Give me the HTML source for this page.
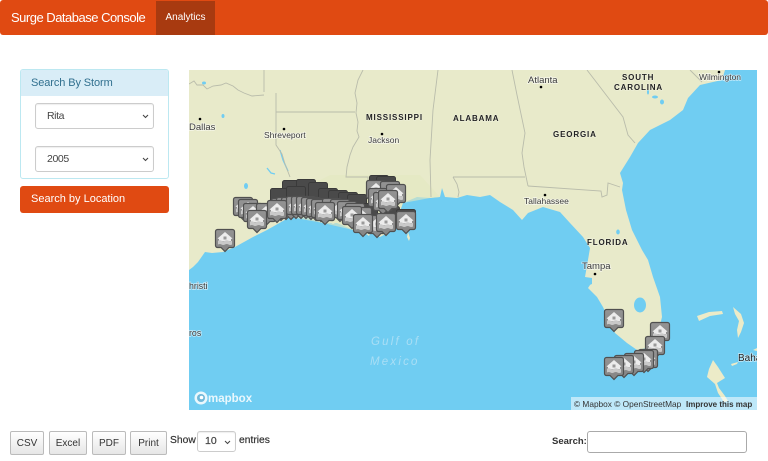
<!DOCTYPE html>
<html><head><meta charset="utf-8"><title>Surge Database Console</title>
<style>
html,body{margin:0;padding:0;background:#fff;width:768px;height:461px;overflow:hidden}
body{font-family:"Liberation Sans",sans-serif;position:relative;color:#333}
.a{position:absolute;box-sizing:border-box}
.sel{background:#fff;border:1px solid #ccc;border-radius:3px;font-size:10.5px;letter-spacing:-.4px;color:#444;box-shadow:inset 0 1px 1px rgba(0,0,0,.07)}
.sel svg{position:absolute;right:4px;top:50%;margin-top:-2px}
.btn{background:linear-gradient(#fff,#e6e6e6);border:1px solid #bbb;border-radius:2px;font-size:10px;color:#333;text-align:center;line-height:24px;height:24px;top:431px}
</style></head><body>
<div class="a" style="left:0;top:0;width:768px;height:35px;background:#e04a12;border-radius:3px"></div>
<div class="a" style="left:11px;top:0;height:35px;line-height:36px;color:#fff;font-size:13px;letter-spacing:-.5px;white-space:nowrap">Surge Database Console</div>
<div class="a" style="left:156px;top:1px;width:59px;height:34px;background:#a83a10;color:#fff;font-size:10px;line-height:34px;text-align:center">Analytics</div>

<div class="a" style="left:20px;top:69px;width:149px;height:110px;border:1px solid #bce8f1;border-radius:3px;background:#fff"></div>
<div class="a" style="left:21px;top:70px;width:147px;height:26px;background:#d9edf7;border-radius:2px 2px 0 0;color:#31708f;font-size:11px;line-height:27px;padding-left:10px;letter-spacing:-.1px">Search By Storm</div>
<div class="a sel" style="left:35px;top:103px;width:119px;height:26px;line-height:24px;padding-left:11px">Rita<svg width="7" height="5" viewBox="0 0 7 5"><path d="M1 1l2.5 2.5L6 1" fill="none" stroke="#444" stroke-width="1.1"/></svg></div>
<div class="a sel" style="left:35px;top:146px;width:119px;height:26px;line-height:24px;padding-left:11px">2005<svg width="7" height="5" viewBox="0 0 7 5"><path d="M1 1l2.5 2.5L6 1" fill="none" stroke="#444" stroke-width="1.1"/></svg></div>
<div class="a" style="left:20px;top:186px;width:149px;height:27px;background:#e04a12;border-radius:3px;color:#fff;font-size:11px;line-height:27px;padding-left:11px">Search by Location</div>

<svg class="a" style="left:189px;top:70px" width="568" height="340" viewBox="189 70 568 340">
<defs>
<linearGradient id="g" x1="0" y1="0" x2="0" y2="1"><stop offset="0" stop-color="#949494"/><stop offset="1" stop-color="#858585"/></linearGradient>
<symbol id="m" width="20" height="24" viewBox="0 0 20 24" overflow="visible">
<path d="M2.5 .5h15a2 2 0 0 1 2 2v14a2 2 0 0 1-2 2h-3.500l-4 4-4-4H2.500a2 2 0 0 1-2-2v-14a2 2 0 0 1 2-2z" fill="url(#g)" stroke="#505050" stroke-width="1.200"/>
<path d="M2.500 9.500L10 3l7.500 6.500-1.500.5v2H4v-2z" fill="#ececec"/>
<rect x="8.500" y="7.500" width="3" height="3" fill="#9a9a9a"/>
<path d="M3 11.800q1.750-1 3.500 0t3.500 0 3.500 0 3.500 0v3.700q-1.750 1-3.500 0t-3.500 0-3.500 0-3.500 0z" fill="#c9c9c9"/>
</symbol>
<symbol id="d" width="20" height="24" viewBox="0 0 20 24" overflow="visible">
<rect x=".5" y=".5" width="19" height="18" rx="2" fill="#4a4a4a" stroke="#3a3a3a"/>
</symbol>
</defs>
<rect x="189" y="70" width="568" height="340" fill="#70cdf2"/>
<path d="M189 70H725L722 80 713 82 700 85 688 98 683 110 670 120 650 130 638 143 630 157 620 173 623 183 622 190 626 210 632 230 642 250 648 260 653 277 660 297 662 317 657 337 647 348 637 350 627 343 615 333 603 307 597 297 588 288 592 282 585 277 588 260 590 248 583 237 570 223 560 212 543 207 528 213 522 220 513 210 500 202 490 195 480 197 467 195 457 198 445 197 442 188 440 197 430 198 417 197 403 203 393 230 380 237 370 233 353 230 337 223 323 223 307 218 290 217 267 230 253 237 235 247 223 252 212 253 205 252 198 262 193 267 189 270Z" fill="#e8eaca"/>
<path d="M290 217L300 190 330 175 420 175 440 197 430 198 403 203 393 230 353 230 323 223Z" fill="#e2e7bf" opacity=".6"/>
<g fill="#70cdf2" stroke="none">
<ellipse cx="640" cy="305" rx="6" ry="7.500"/>
<ellipse cx="618" cy="232" rx="1.800" ry="2.500"/><ellipse cx="246" cy="186" rx="2" ry="3"/><ellipse cx="223" cy="116" rx="1.500" ry="2"/><ellipse cx="204" cy="83" rx="2" ry="1.500"/>
<ellipse cx="655" cy="97" rx="3" ry="1.500"/><ellipse cx="662" cy="102" rx="2" ry="2.500"/><ellipse cx="648" cy="92" rx="1" ry="2.500"/>
<path d="M585 277l7 1 0 6-5 2-3-4z"/>
</g>
<g fill="none" stroke="#70cdf2" stroke-width="1.300">
<path d="M280 150l3 10 5 11"/><path d="M267 168l4 5 4 1"/>
</g>
<g fill="#ecebc8">
<path d="M697 316l12-4 13-1 1 3-13 2-11 5zM733 307l8 7 3 9-3 9-3 6-1-8 2-9-4-7z"/>
<path d="M713 360l5 7 7 11-8 5 2 5 6 8 3 5-4 1-6-9-3-9-8-7 2-8zM731 364l7-2-1 2-5 2zM753 350l4-2v3z"/>
<path d="M355 223l5 1 3 3-4 0zM330 222l5 1-2 1zM365 233l5 1-1 2z"/><path d="M408 232l2 6-1 3-2-4z"/>
</g>
<g fill="none" stroke="#b9bcab" stroke-width=".9">
<path d="M189 84l5-3 3 4 6 0 4 4 6-3 8-1 5-2 7 3 5 4 6 3 8 3 12-1"/>
<path d="M264 70V92"/><path d="M276 93V145l6 9 3 10 5 13"/><path d="M276 112H355"/>
<path d="M363 70l-5 10-3 13 2 10-1 10 2 9-1 9 2 6-6 10-3 8-3 12-1 10H368v8"/>
<path d="M438 70l-5 40-3 50 1 37"/><path d="M453 177h72"/><path d="M453 177l4 7 2 8-1 5"/>
<path d="M512 70l5 25 8 38-3 20 2 14 4 19"/><path d="M528 186l73 5 1 6 5-2 1-12 12 4"/>
<path d="M587 70l10 13 13 17 13 17 5 18 7 8"/><path d="M690 70l12 12"/>
</g>
<g font-family="'Liberation Sans',sans-serif" font-size="8.500" fill="#3a3a3a" stroke="#fff" stroke-width="1.500" stroke-opacity=".6" paint-order="stroke">
<text x="189" y="130" font-size="9.500">Dallas</text>
<text x="264" y="138" font-size="8.500">Shreveport</text>
<text x="368" y="143" font-size="8.500">Jackson</text>
<text x="528" y="83" font-size="9.500">Atlanta</text>
<text x="524" y="204" font-size="8.500">Tallahassee</text>
<text x="699" y="80" font-size="8.500">Wilmington</text>
<text x="582" y="269" font-size="9.500">Tampa</text>
<text x="189" y="289" font-size="8.800">hristi</text>
<text x="189" y="336" font-size="8.800">ros</text>
<text x="738" y="361" font-size="10" fill="#222">Baha</text>
</g>
<g font-family="'Liberation Sans',sans-serif" font-weight="bold" font-size="8" fill="#222" letter-spacing=".85" stroke="#fff" stroke-width="1" stroke-opacity=".4" paint-order="stroke">
<text x="366" y="120">MISSISSIPPI</text>
<text x="453" y="121">ALABAMA</text>
<text x="553" y="137">GEORGIA</text>
<text x="622" y="80">SOUTH</text>
<text x="614" y="90">CAROLINA</text>
<text x="587" y="245">FLORIDA</text>
</g>
<g font-family="'Liberation Sans',sans-serif" font-style="italic" font-size="11.500" fill="#a9def5" letter-spacing="2.200">
<text x="371" y="345">Gulf of</text><text x="370" y="365">Mexico</text>
</g>
<g fill="#000">
<circle cx="200" cy="119" r="1.300"/><circle cx="284" cy="129" r="1.300"/><circle cx="382" cy="134" r="1.300"/><circle cx="541" cy="87" r="1.300"/><circle cx="545" cy="195" r="1.300"/><circle cx="719" cy="72" r="1.300"/><circle cx="595" cy="274" r="1.300"/>
</g>
<!-- dark stack -->
<use href="#d" x="282" y="180" width="20" height="24"/><use href="#d" x="296" y="179" width="20" height="24"/><use href="#d" x="308" y="182" width="20" height="24"/><use href="#d" x="270" y="188" width="20" height="24"/><use href="#d" x="286" y="186" width="20" height="24"/><use href="#d" x="318" y="188" width="20" height="24"/><use href="#d" x="328" y="190" width="20" height="24"/><use href="#d" x="338" y="192" width="20" height="24"/><use href="#d" x="347" y="194" width="20" height="24"/><use href="#d" x="369" y="175" width="20" height="24"/><use href="#d" x="376" y="176" width="20" height="24"/><use href="#d" x="358" y="203" width="20" height="24"/><use href="#d" x="380" y="206" width="20" height="24"/><use href="#d" x="396" y="209" width="20" height="24"/>
<!-- mid -->
<use href="#m" x="233" y="197" width="20" height="24"/><use href="#m" x="238" y="199" width="20" height="24"/><use href="#m" x="243" y="203" width="20" height="24"/><use href="#m" x="256" y="203" width="20" height="24"/>
<use href="#m" x="271" y="198" width="20" height="24"/><use href="#m" x="276" y="197" width="20" height="24"/><use href="#m" x="281" y="197" width="20" height="24"/><use href="#m" x="286" y="196" width="20" height="24"/><use href="#m" x="291" y="196" width="20" height="24"/><use href="#m" x="296" y="196" width="20" height="24"/><use href="#m" x="301" y="197" width="20" height="24"/><use href="#m" x="306" y="198" width="20" height="24"/><use href="#m" x="311" y="199" width="20" height="24"/>
<use href="#m" x="322" y="198" width="20" height="24"/><use href="#m" x="330" y="199" width="20" height="24"/><use href="#m" x="337" y="201" width="20" height="24"/><use href="#m" x="345" y="203" width="20" height="24"/><use href="#m" x="352" y="207" width="20" height="24"/><use href="#m" x="366" y="180" width="20" height="24"/><use href="#m" x="380" y="181" width="20" height="24"/><use href="#m" x="368" y="188" width="20" height="24"/><use href="#m" x="386" y="184" width="20" height="24"/><use href="#m" x="373" y="192" width="20" height="24"/><use href="#m" x="367" y="215" width="20" height="24"/>
<!-- front -->
<use href="#m" x="215" y="229" width="20" height="24"/><use href="#m" x="247" y="210" width="20" height="24"/><use href="#m" x="267" y="200" width="20" height="24"/><use href="#m" x="315" y="202" width="20" height="24"/><use href="#m" x="342" y="206" width="20" height="24"/><use href="#m" x="353" y="214" width="20" height="24"/><use href="#m" x="378" y="190" width="20" height="24"/><use href="#m" x="376" y="213" width="20" height="24"/><use href="#m" x="396" y="211" width="20" height="24"/>
<use href="#m" x="604" y="309" width="20" height="24"/><use href="#m" x="650" y="322" width="20" height="24"/><use href="#m" x="645" y="336" width="20" height="24"/><use href="#m" x="638" y="349" width="20" height="24"/><use href="#m" x="634" y="350" width="20" height="24"/><use href="#m" x="624" y="353" width="20" height="24"/><use href="#m" x="614" y="355" width="20" height="24"/><use href="#m" x="604" y="357" width="20" height="24"/>
<!-- logo -->
<circle cx="201" cy="398" r="6.500" fill="#fff" opacity=".85"/><circle cx="201" cy="398" r="4" fill="#70b8d8"/><circle cx="201.500" cy="397.500" r="1.800" fill="#fff"/>
<text x="208" y="402" font-family="'Liberation Sans',sans-serif" font-weight="bold" font-size="11.500" fill="#fff" fill-opacity=".85" letter-spacing="0">mapbox</text>
<rect x="571" y="397" width="186" height="13" fill="#fff" opacity=".55"/>
<text x="574" y="407" font-family="'Liberation Sans',sans-serif" font-size="8.300" fill="#333">© Mapbox © OpenStreetMap</text>
<text x="686" y="407" font-family="'Liberation Sans',sans-serif" font-size="8" font-weight="bold" fill="#333">Improve this map</text>
</svg>

<div class="a btn" style="left:10px;width:34px">CSV</div>
<div class="a btn" style="left:49px;width:38px">Excel</div>
<div class="a btn" style="left:92px;width:34px">PDF</div>
<div class="a btn" style="left:130px;width:37px">Print</div>
<div class="a" style="left:170px;top:435px;font-size:10.300px;line-height:12px;-webkit-text-stroke:.2px #333">Show</div>
<div class="a sel" style="left:197px;top:431px;width:39px;height:21px;line-height:19px;padding-left:7px;font-size:10.500px;letter-spacing:0;-webkit-text-stroke:.2px #444">10<svg width="7" height="5" viewBox="0 0 7 5"><path d="M1 1l2.500 2.500L6 1" fill="none" stroke="#444" stroke-width="1"/></svg></div>
<div class="a" style="left:239px;top:435px;font-size:10.300px;line-height:12px;-webkit-text-stroke:.2px #333">entries</div>
<div class="a" style="left:552px;top:436px;font-size:9.500px;line-height:12px;font-weight:bold;color:#333;white-space:nowrap">Search:</div>
<div class="a" style="left:587px;top:431px;width:160px;height:22px;border:1px solid #aaa;border-radius:3px;background:#fff"></div>
</body></html>
